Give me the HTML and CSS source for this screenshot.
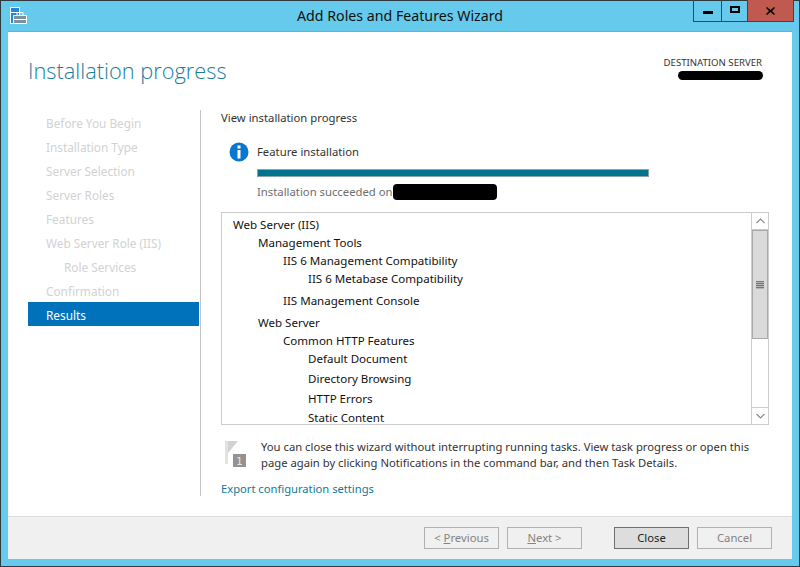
FILE: index.html
```html
<!DOCTYPE html>
<html lang="en">
<head>
<meta charset="utf-8">
<title>Add Roles and Features Wizard</title>
<link rel="stylesheet" href="styles.css">
</head>
<body>
<div class="window">
  <div class="titlebar">
    <svg class="app-icon" width="17" height="17" viewBox="0 0 17 17">
      <path d="M.5.5h9v16h-9z" fill="#1f88dc" stroke="#fff"/>
      <path d="M1 5.500h8" stroke="#fff"/>
      <path d="M3.500 8.500h13v8h-13z" fill="#7d919e" stroke="#fff"/>
      <path d="M7 8V5.500h6V8M4 12.500h12" fill="none" stroke="#fff"/>
    </svg>
    <div class="title">Add Roles and Features Wizard</div>
    <div class="controls">
      <div class="ctl ctl-min"><span class="glyph-min"></span></div>
      <div class="ctl ctl-max"><span class="glyph-max"></span></div>
      <div class="ctl ctl-close"><svg width="9" height="8" viewBox="0 0 9 8"><path d="M1 0l3.500 3L8 0l1 1-3 3 3 3-1 1-3.500-3L1 8 0 7l3-3-3-3z" fill="#000"/></svg></div>
    </div>
  </div>
  <div class="client">
    <header class="header">
      <h1 class="heading">Installation progress</h1>
      <div class="dest">
        <div class="dest-label">DESTINATION SERVER</div>
        <div class="blot blot-server"></div>
      </div>
    </header>
    <div class="main">
      <nav class="nav">
        <div class="nav-item">Before You Begin</div>
        <div class="nav-item">Installation Type</div>
        <div class="nav-item">Server Selection</div>
        <div class="nav-item">Server Roles</div>
        <div class="nav-item">Features</div>
        <div class="nav-item">Web Server Role (IIS)</div>
        <div class="nav-item nav-sub">Role Services</div>
        <div class="nav-item">Confirmation</div>
        <div class="nav-item nav-active">Results</div>
      </nav>
      <section class="pane">
        <div class="view-label">View installation progress</div>
        <div class="status">
          <svg class="info" width="20" height="20" viewBox="0 0 20 20">
            <circle cx="10" cy="10" r="9.500" fill="#0b76cf"/>
            <rect x="8.500" y="3.500" width="3" height="3" fill="#fff"/>
            <rect x="8.500" y="8" width="3" height="8.500" fill="#fff"/>
          </svg>
          <div class="status-body">
            <div class="status-title">Feature installation</div>
            <div class="progress"><div class="progress-fill"></div></div>
            <div class="status-result">Installation succeeded on<span class="blot blot-result"></span></div>
          </div>
        </div>
        <div class="tree-box">
          <div class="tree">
            <div class="row l0">Web Server (IIS)</div>
            <div class="row l1">Management Tools</div>
            <div class="row l2">IIS 6 Management Compatibility</div>
            <div class="row l3">IIS 6 Metabase Compatibility</div>
            <div class="row l2 gap4">IIS Management Console</div>
            <div class="row l1 gap4">Web Server</div>
            <div class="row l2">Common HTTP Features</div>
            <div class="row l3">Default Document</div>
            <div class="row l3 gap2">Directory Browsing</div>
            <div class="row l3 gap2">HTTP Errors</div>
            <div class="row l3 last">Static Content</div>
          </div>
          <div class="scrollbar">
            <div class="sb-btn"><svg width="9" height="6" viewBox="0 0 9 6"><path d="M.5 5l4-4 4 4" fill="none" stroke="#8a8a8a" stroke-width="1.200"/></svg></div>
            <div class="sb-track">
              <div class="sb-thumb"><span class="grip"></span></div>
            </div>
            <div class="sb-btn sb-btn-down"><svg width="9" height="6" viewBox="0 0 9 6"><path d="M.5 1l4 4 4-4" fill="none" stroke="#8a8a8a" stroke-width="1.200"/></svg></div>
          </div>
        </div>
        <div class="notice">
          <svg class="flag" width="24" height="28" viewBox="0 0 24 28">
            <path d="M1 1h3v23H1z" fill="#e2e2e2"/>
            <path d="M4 1h10L4 13z" fill="#d2d2d2"/>
            <rect x="9" y="14" width="13" height="13" fill="#939393"/>
          </svg>
          <span class="flag-num">1</span>
          <p class="notice-text">You can close this wizard without interrupting running tasks. View task progress or open this page again by clicking Notifications in the command bar, and then Task Details.</p>
        </div>
        <a class="export">Export configuration settings</a>
      </section>
    </div>
    <footer class="footer">
      <button class="btn" disabled>&lt; <u>P</u>revious</button>
      <button class="btn" disabled><u>N</u>ext &gt;</button>
      <button class="btn btn-primary">Close</button>
      <button class="btn" disabled>Cancel</button>
    </footer>
  </div>
</div>
</body>
</html>
```
FILE: styles.css
```css
* { box-sizing: border-box; }
html, body { margin: 0; padding: 0; }
body {
  width: 800px;
  height: 567px;
  overflow: hidden;
  font-family: "Noto Sans", "Open Sans", sans-serif;
  font-size: 11.300px;
  color: #1a1a1a;
}
.window {
  width: 800px;
  height: 567px;
  background: #65caeb;
  border: 1px solid #2f3a40;
  display: flex;
  flex-direction: column;
  padding: 0 7px 7px;
}
.titlebar {
  height: 30px;
  flex: none;
  position: relative;
  display: flex;
  justify-content: center;
  box-shadow: 0 1px 0 #7fa9ba;
}
.app-icon { position: absolute; left: 2px; top: 6px; }
.title { font-size: 14.200px; line-height: 30px; color: #111; }
.controls {
  position: absolute;
  right: -2px;
  top: -1px;
  height: 22px;
  display: flex;
  border: 1px solid #2b4a5a;
  border-top: 0;
}
.ctl { height: 21px; display: flex; align-items: center; justify-content: center; }
.ctl-min { width: 28px; border-right: 1px solid #2b4a5a; }
.ctl-max { width: 26px; border-right: 1px solid #2b4a5a; }
.ctl-close { width: 45px; background: #c05a50; }
.glyph-min { width: 10px; height: 3px; background: #000; margin-top: 4px; }
.glyph-max { width: 10px; height: 7px; border: 2px solid #000; margin-top: -2px; }
.client {
  flex: 1;
  background: #fff;
  display: flex;
  flex-direction: column;
}
.header {
  height: 79px;
  flex: none;
  display: flex;
  justify-content: space-between;
  padding: 0 29px 0 20px;
}
.heading {
  margin: 24px 0 0;
  font-size: 21.800px;
  font-weight: 300;
  line-height: 32px;
  color: #1a7e9c;
  font-family: "Open Sans", sans-serif;
}
.dest { margin-top: 25px; display: flex; flex-direction: column; align-items: flex-end; }
.dest-label { font-size: 9.600px; line-height: 14px; color: #333; margin-right: 1px; }
.blot { display: block; background: #000; border-radius: 5px; }
.blot-server { width: 85px; height: 9px; margin-top: 1px; }
.main { height: 386px; margin-bottom: 20px; flex: none; display: flex; }
.nav {
  width: 193px;
  flex: none;
  padding: 0 1px 0 20px;
  border-right: 1px solid #c4c4c4;
  margin-right: 20px;
  font-size: 11.800px;
}
.nav-item {
  width: 171px;
  height: 24px;
  padding-top: 3px;
  line-height: 21px;
  padding-left: 18px;
  color: #d2d2d2;
}
.nav-item.nav-sub { padding-left: 36px; }
.nav-item.nav-active { background: #0072bc; color: #fff; }
.pane { width: 548px; flex: none; display: flex; flex-direction: column; }
.view-label { line-height: 16px; color: #333; }
.status { display: flex; margin-top: 16px; padding-left: 8px; height: 62px; }
.info { flex: none; }
.status-body { margin-left: 8px; width: 392px; }
.status-title { line-height: 16px; margin-top: 2px; color: #333; }
.progress {
  height: 8px;
  margin-top: 9px;
  border: 1px solid #8aa3ac;
  background: #fff;
}
.progress-fill { height: 100%; background: #00748f; }
.status-result {
  display: flex;
  align-items: center;
  line-height: 16px;
  margin-top: 7px;
  color: #6d6d6d;
  white-space: nowrap;
}
.blot-result { width: 104px; height: 16px; flex: none; margin-top: -1px; border-radius: 4px; }
.tree-box {
  height: 213px;
  margin-top: 8px;
  border: 1px solid #cbcbcb;
  display: flex;
  font-size: 11.550px;
}
.tree { flex: 1; padding-top: 3px; }
.row { height: 18px; line-height: 18px; color: #111; }
.l0 { padding-left: 11px; }
.l1 { padding-left: 36px; }
.l2 { padding-left: 61px; }
.l3 { padding-left: 86px; }
.gap2 { margin-top: 2px; }
.gap4 { margin-top: 4px; }
.row.last { margin-top: 3px; height: 14px; line-height: 14px; }
.scrollbar {
  width: 17px;
  flex: none;
  display: flex;
  flex-direction: column;
  border-left: 1px solid #cbcbcb;
}
.sb-btn {
  height: 17px;
  flex: none;
  display: flex;
  align-items: center;
  justify-content: center;
  border-bottom: 1px solid #cbcbcb;
}
.sb-btn-down { border-bottom: 0; border-top: 1px solid #cbcbcb; }
.sb-track { flex: 1; }
.sb-thumb {
  height: 109px;
  background: #dadada;
  border: 1px solid #a9a9a9;
  display: flex;
  align-items: center;
  justify-content: center;
}
.grip {
  width: 8px;
  height: 8px;
  background: repeating-linear-gradient(#777 0 1px, #b4b4b4 1px 2px);
}
.notice { position: relative; display: flex; margin-top: 12px; height: 36px; padding-left: 3px; }
.flag { flex: none; margin-top: 3px; }
.flag-num {
  position: absolute;
  left: 12px;
  top: 18px;
  width: 13px;
  text-align: center;
  font-family: "DejaVu Sans", sans-serif;
  font-size: 10px;
  line-height: 13px;
  color: #e8e8e8;
}
.notice-text { margin: 2px 0 0 13px; width: 505px; line-height: 16px; color: #333; font-size: 11.250px; }
.export { color: #0f7a99; line-height: 14px; margin-top: 9px; font-size: 11.200px; }
.footer {
  flex: 1;
  background: #f0f0f0;
  border-top: 1px solid #dcdcdc;
  display: flex;
  justify-content: flex-end;
  gap: 8px;
  padding: 10px 20px 0 0;
}
.btn {
  width: 75px;
  height: 22px;
  padding: 0;
  font: inherit;
  background: #f0f0f0;
  border: 1px solid #adb2b5;
  color: #838383;
  line-height: 18px;
}
.btn-primary {
  background: #dddddd;
  border-color: #707070;
  color: #222;
  margin-left: 24px;
}
```
